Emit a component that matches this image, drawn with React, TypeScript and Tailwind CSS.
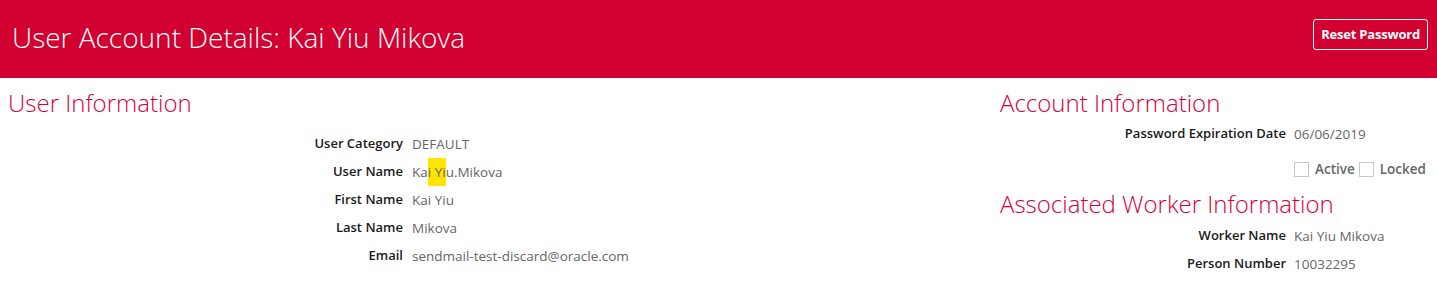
import React from 'react';

const font = { fontFamily: '"Open Sans", "Noto Sans", sans-serif' };

interface FieldProps {
  label: string;
  children: React.ReactNode;
}

function Field({ label, children }: FieldProps) {
  return (
    <>
      <div className="flex h-[28px] items-center justify-end text-[13px] font-semibold text-[#1a1a1a]">{label}</div>
      <div className="flex h-[28px] items-center text-[13.5px] text-[#666666]">{children}</div>
    </>
  );
}

function SectionTitle({ children }: { children: React.ReactNode }) {
  return <h2 className="text-[24px] font-light leading-[28px] text-[#d6003a]">{children}</h2>;
}

function Checkbox({ label }: { label: string }) {
  return (
    <label className="flex items-center gap-[6px]">
      <span className="h-[15px] w-[15px] border border-[#c8c8c8] bg-white" />
      <span>{label}</span>
    </label>
  );
}

export default function App() {
  return (
    <div className="h-[282px] w-[1437px] overflow-hidden bg-white" style={font}>
      <header className="flex h-[78px] items-center justify-between bg-[#d20030] pl-[12px] pr-[9px]">
        <h1 className="mb-[5px] text-[28px] font-light text-white">User Account Details: Kai Yiu Mikova</h1>
        <button className="mb-[9px] h-[31px] rounded-[3px] border border-white px-[7px] text-[13px] font-bold tracking-[-0.2px] text-white">
          Reset Password
        </button>
      </header>

      <div className="flex">
        <section className="w-[1000px] pl-[8px] pt-[11px]">
          <SectionTitle>User Information</SectionTitle>
          <div className="mt-[13px] grid grid-cols-[395px_auto] gap-x-[9px]">
            <Field label="User Category">DEFAULT</Field>
            <Field label="User Name">
              Ka<span className="bg-[#ffe500] py-[4px]">i Yi</span>u.Mikova
            </Field>
            <Field label="First Name">Kai Yiu</Field>
            <Field label="Last Name">Mikova</Field>
            <Field label="Email">sendmail-test-discard@oracle.com</Field>
          </div>
          <div className="mt-[12px]">
            <SectionTitle>Additional Information</SectionTitle>
          </div>
        </section>

        <section className="flex-1 pt-[11px]">
          <SectionTitle>Account Information</SectionTitle>
          <div className="mt-[3px] grid grid-cols-[286px_auto] gap-x-[8px]">
            <Field label="Password Expiration Date">06/06/2019</Field>
            <div />
            <div className="mt-[7px] flex h-[28px] items-center gap-[4px] text-[13.5px] font-semibold text-[#666666]">
              <Checkbox label="Active" />
              <Checkbox label="Locked" />
            </div>
          </div>
          <div className="mt-[7px]">
            <SectionTitle>Associated Worker Information</SectionTitle>
          </div>
          <div className="mt-[4px] grid grid-cols-[286px_auto] gap-x-[8px]">
            <Field label="Worker Name">Kai Yiu Mikova</Field>
            <Field label="Person Number">10032295</Field>
          </div>
        </section>
      </div>
    </div>
  );
}
